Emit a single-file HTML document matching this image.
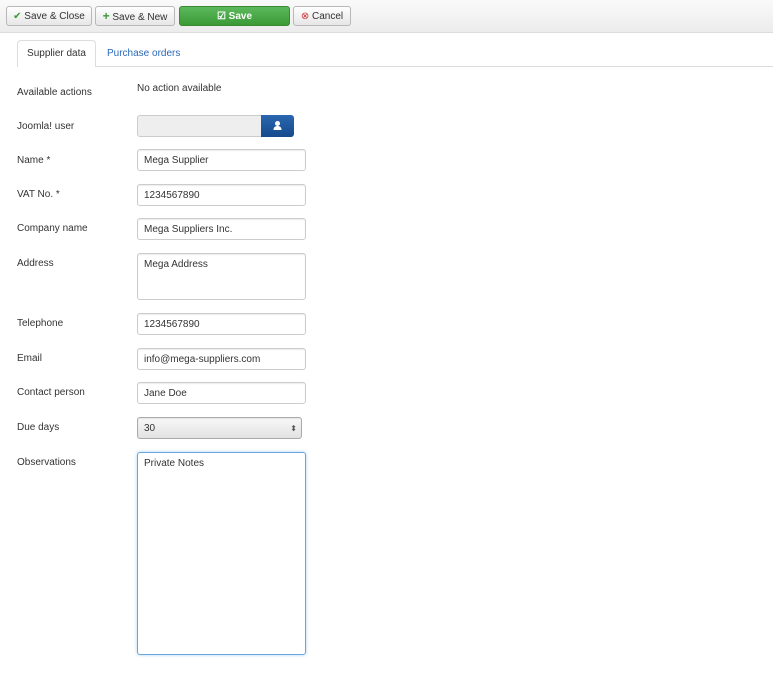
<!DOCTYPE html>
<html><head><style>
body{margin:0;width:773px;height:684px;background:#fff;font-family:"Liberation Sans",sans-serif;font-size:10px;color:#333;position:relative;overflow:hidden}
.tb{position:absolute;left:0;top:0;width:773px;height:32px;background:linear-gradient(#fafafa,#ececec);border-bottom:1px solid #ddd}
.b{position:absolute;top:6px;height:18px;border:1px solid #b8b8b8;border-radius:3px;background:linear-gradient(#fff,#e6e6e6);font-size:10px;line-height:19px;text-align:center;color:#333;box-sizing:content-box}
.g{background:linear-gradient(#5cb85c,#3b9a36);border-color:#3a8a34;color:#fff;font-weight:bold}
.tab{position:absolute;left:17px;top:40px;width:77px;height:26px;border:1px solid #ddd;border-bottom:none;border-radius:4px 4px 0 0;background:#fff;line-height:26px;text-align:center;font-size:10px}
.line{position:absolute;left:17px;top:66px;width:756px;border-top:1px solid #ddd}
.l{position:absolute;left:17px;font-size:10px}
.i{position:absolute;left:137px;width:161px;height:20px;border:1px solid #ccc;border-radius:3px;padding:0 0 0 6px;line-height:22px;font-size:10px;box-shadow:inset 0 1px 1px rgba(0,0,0,.08)}
</style></head><body>
<div class="tb">
<div class="b" style="left:6px;width:84px"><span style="color:#3a9a36">✔</span> Save &amp; Close</div>
<div class="b" style="left:95px;width:78px"><span style="color:#3a9a36;font-weight:bold;font-size:12px">+</span> Save &amp; New</div>
<div class="b g" style="left:179px;width:109px">☑ Save</div>
<div class="b" style="left:293px;width:56px"><span style="color:#c33">⊗</span> Cancel</div>
</div>
<div class="line"></div>
<div class="tab">Supplier data</div>
<div style="position:absolute;left:107px;top:48px;color:#2a69b8">Purchase orders</div>
<div class="l" style="top:87px">Available actions</div>
<div style="position:absolute;left:137px;top:83px">No action available</div>
<div class="l" style="top:121px">Joomla! user</div>
<div style="position:absolute;left:137px;top:115px;width:123px;height:20px;border:1px solid #ccc;border-radius:3px 0 0 3px;background:#eee"></div>
<div style="position:absolute;left:261px;top:115px;width:33px;height:22px;border-radius:0 3px 3px 0;background:linear-gradient(#2a67b0,#164a8c)"><svg width="33" height="22"><circle cx="16.5" cy="8.5" r="2.5" fill="#fff"/><path d="M12.5 15c0-3 1.8-4 4-4s4 1 4 4z" fill="#fff"/></svg></div>
<div class="l" style="top:155px">Name *</div><div class="i" style="top:149px">Mega Supplier</div>
<div class="l" style="top:189px">VAT No. *</div><div class="i" style="top:184px">1234567890</div>
<div class="l" style="top:223px">Company name</div><div class="i" style="top:218px">Mega Suppliers Inc.</div>
<div class="l" style="top:258px">Address</div><div class="i" style="top:253px;height:45px">Mega Address</div>
<div class="l" style="top:318px">Telephone</div><div class="i" style="top:313px">1234567890</div>
<div class="l" style="top:353px">Email</div><div class="i" style="top:348px">info@mega-suppliers.com</div>
<div class="l" style="top:387px">Contact person</div><div class="i" style="top:382px">Jane Doe</div>
<div class="l" style="top:422px">Due days</div><div class="i" style="top:417px;width:157px;background:linear-gradient(#f8f8f8,#e2e2e2);border-color:#aaa">30<span style="position:absolute;right:4px;top:0;font-size:8px;color:#555">⬍</span></div>
<div class="l" style="top:457px">Observations</div><div class="i" style="top:452px;height:201px;border-color:#6aa5e0;box-shadow:0 0 3px rgba(82,168,236,.5)">Private Notes</div>
</body></html>
